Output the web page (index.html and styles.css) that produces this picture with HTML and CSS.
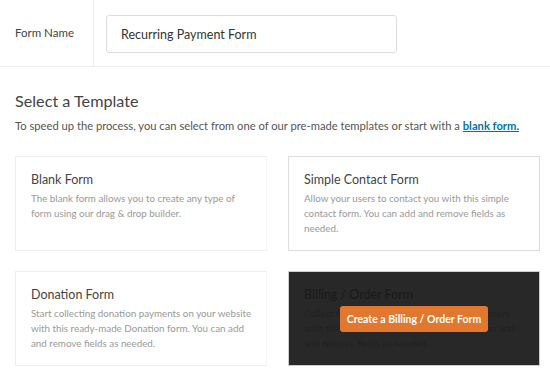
FILE: index.html
```html
<!DOCTYPE html>
<html lang="en">
  <head>
    <meta charset="UTF-8" />
    <title>Select a Template</title>
    <link rel="stylesheet" href="styles.css">
  </head>

  <body>
    <div class="form-name-bar">
      <label class="form-name-label" for="form-name">Form Name</label>
      <div class="form-name-field">
        <input type="text" id="form-name" value="Recurring Payment Form" />
      </div>
    </div>

    <div class="templates">
      <h2>Select a Template</h2>
      <p class="templates-intro">
        To speed up the process, you can select from one of our pre-made templates or start with a
        <a href="#">blank form.</a>
      </p>

      <div class="template-grid">
        <div class="template template-left">
          <h3>Blank Form</h3>
          <p>The blank form allows you to create any type of form using our drag &amp; drop builder.</p>
        </div>

        <div class="template">
          <h3>Simple Contact Form</h3>
          <p>Allow your users to contact you with this simple contact form. You can add and remove fields as needed.</p>
        </div>

        <div class="template template-left">
          <h3>Donation Form</h3>
          <p>Start collecting donation payments on your website with this ready-made Donation form. You can add and remove fields as needed.</p>
        </div>

        <div class="template template-active">
          <h3>Billing / Order Form</h3>
          <p>Collect Payments for product and service orders with this ready-made form template. You can add and remove fields as needed.</p>
          <div class="template-overlay">
            <button type="button">Create a Billing / Order Form</button>
          </div>
        </div>
      </div>
    </div>
  </body>
</html>
```

FILE: styles.css
```css
* {
  box-sizing: border-box;
}

body {
  margin: 0;
  font-family: Lato, "Open Sans", sans-serif;
  color: #444;
  background: #fff;
}

.form-name-bar {
  display: flex;
  height: 67px;
  border-bottom: 1px solid #eee;
}

.form-name-label {
  display: flex;
  align-items: center;
  width: 94px;
  padding: 0 15px 2px;
  border-right: 1px solid #eee;
  font-size: 11.5px;
  color: #444;
}

.form-name-field {
  padding: 15px 0 0 12px;
}

.form-name-field input {
  width: 291px;
  height: 38px;
  padding: 0 14px;
  border: 1px solid #ddd;
  border-radius: 3px;
  font-family: inherit;
  font-size: 12.5px;
  color: #333;
}

.templates {
  padding: 0 10px 0 15px;
}

h2 {
  margin: 24px 0 0;
  font-size: 16.2px;
  font-weight: 400;
  color: #444;
}

.templates-intro {
  margin: 9px 0 0;
  font-size: 11.2px;
  color: #555;
}

.templates-intro a {
  color: #0073aa;
  font-weight: 700;
}

.template-grid {
  display: grid;
  grid-template-columns: 252px 252px;
  grid-auto-rows: 95px;
  column-gap: 21px;
  row-gap: 20px;
  margin-top: 24px;
}

.template {
  position: relative;
  padding: 15px 9px 0 15px;
  border: 1px solid #ddd;
}

.template-left {
  border-color: #eee #f6f6f6 #eee #eee;
}

.template h3 {
  margin: 0;
  font-size: 12.5px;
  font-weight: 400;
  color: #444;
}

.template p {
  margin: 4px 0 0;
  font-size: 9.8px;
  line-height: 15px;
  color: #999;
}

.template-active {
  border-color: #ccc;
}

.template-overlay {
  position: absolute;
  inset: 0;
  display: flex;
  align-items: center;
  justify-content: center;
  background: rgba(22, 22, 22, 0.92);
}

.template-overlay button {
  padding: 0 7px;
  height: 26px;
  border: 0;
  border-radius: 3px;
  background: #e27730;
  color: #fff;
  font-family: inherit;
  font-size: 10.5px;
  font-weight: 700;
}
```
